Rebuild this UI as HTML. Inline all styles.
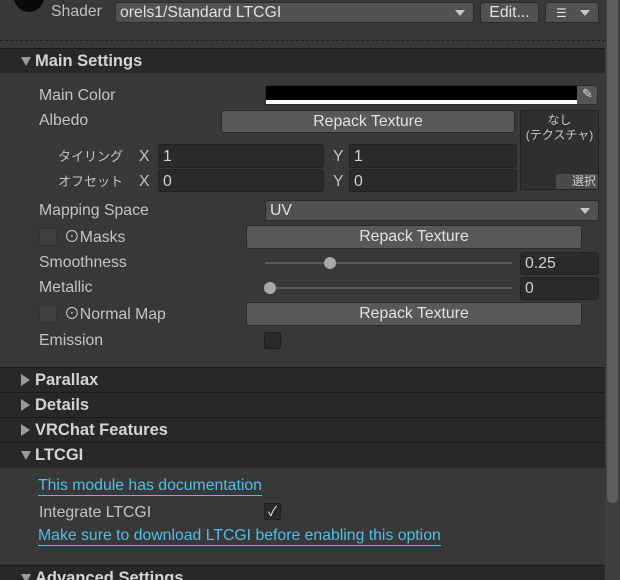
<!DOCTYPE html>
<html style="width:620px;height:580px;overflow:hidden"><head><meta charset="utf-8"><style>
*{margin:0;padding:0;box-sizing:border-box}
body{width:620px;height:580px;overflow:hidden;background:#383838;font-family:"Liberation Sans","Noto Sans CJK JP",sans-serif;color:#c4c4c4;font-size:15.8px;position:relative}
.a{position:absolute}
.lbl{position:absolute;line-height:20px;white-space:nowrap;margin-top:1px}
.hdr{position:absolute;left:0;width:605px;height:25px;background:#282828;border-top:1px solid #1a1a1a;font-weight:bold;color:#d4d4d4;font-size:16.5px;line-height:24px;padding-left:35px}
.tri{position:absolute;left:21px;top:7px;width:0;height:0}
.down{border-left:5px solid transparent;border-right:5px solid transparent;border-top:9px solid #9a9a9a;top:8px}
.right{border-top:6px solid transparent;border-bottom:6px solid transparent;border-left:9px solid #9a9a9a;top:6px}
.field{position:absolute;background:#2a2a2a;border:1px solid #222;border-radius:3px;line-height:20px;padding-left:4px;color:#d2d2d2}
.btn{position:absolute;background:#585858;border:1px solid #2a2a2a;border-radius:3px;text-align:center;line-height:22px;color:#e2e2e2}
.dd{position:absolute;background:#515151;border:1px solid #2c2c2c;border-radius:3px;line-height:20px;padding-left:4px;color:#e0e0e0}
.dd:after{content:"";position:absolute;right:8px;top:7px;border-left:5px solid transparent;border-right:5px solid transparent;border-top:6px solid #c8c8c8}
.link{position:absolute;color:#4bc1e8;border-bottom:1px solid #4bc1e8;line-height:19px;white-space:nowrap}
.cb{position:absolute;width:17px;height:17px;background:#2a2a2a;border:1px solid #202020;border-radius:2px}
.mini{position:absolute;width:18px;height:18px;background:#3f3f3f;border:1px solid #333}
</style></head><body>
<div class="a" style="left:14px;top:-18px;width:30px;height:30px;border-radius:50%;background:#0a0a0a"></div>
<div class="lbl" style="left:51px;top:1px;color:#c0c0c0">Shader</div>
<div class="dd" style="left:115px;top:2px;width:359px;height:21px">orels1/Standard LTCGI</div>
<div class="btn" style="left:480px;top:2px;width:59px;height:21px;background:#515151;line-height:20px">Edit...</div>
<div class="dd" style="left:545px;top:2px;width:54px;height:21px;padding:0"><span style="position:absolute;left:10px;top:0;font-size:12px">☰</span></div>
<div class="a" style="left:0;top:40px;width:605px;border-top:1px dashed #1e1e1e"></div>
<div class="hdr" style="top:48px"><span class="tri down"></span>Main Settings</div>
<div class="lbl" style="left:39px;top:85px">Main Color</div>
<div class="a" style="left:265px;top:85px;width:333px;height:20px;border:1px solid #2c2c2c;background:#555;border-radius:3px"></div>
<div class="a" style="left:266px;top:86px;width:311px;height:14px;background:#000"></div>
<div class="a" style="left:266px;top:100px;width:311px;height:4px;background:#fff"></div>
<div class="a" style="left:582px;top:86px;font-size:13px;color:#ddd">✎</div>
<div class="lbl" style="left:39px;top:110px">Albedo</div>
<div class="btn" style="left:221px;top:110px;width:294px;height:23px">Repack Texture</div>
<div class="a" style="left:520px;top:110px;width:79px;height:80px;background:#2f2f2f;border:1px solid #222;font-size:12px;text-align:center;line-height:15px;padding-top:2px;color:#c8c8c8">なし<br>(テクスチャ)</div>
<div class="a" style="left:556px;top:174px;width:42px;height:15px;background:#4a4a4a;font-size:12px;line-height:14px;text-align:right;padding-right:2px;color:#ccc">選択</div>
<div class="lbl" style="left:58px;top:146px;font-size:13px">タイリング</div>
<div class="lbl" style="left:139px;top:146px">X</div>
<div class="field" style="left:158px;top:144px;width:166px;height:24px;padding-top:2px">1</div>
<div class="lbl" style="left:333px;top:146px">Y</div>
<div class="field" style="left:349px;top:144px;width:168px;height:24px;padding-top:2px">1</div>
<div class="lbl" style="left:58px;top:171px;font-size:13px">オフセット</div>
<div class="lbl" style="left:139px;top:171px">X</div>
<div class="field" style="left:158px;top:169px;width:166px;height:23px;padding-top:2px">0</div>
<div class="lbl" style="left:333px;top:171px">Y</div>
<div class="field" style="left:349px;top:169px;width:168px;height:23px;padding-top:2px">0</div>
<div class="lbl" style="left:39px;top:200px">Mapping Space</div>
<div class="dd" style="left:265px;top:200px;width:334px;height:21px">UV</div>
<div class="mini" style="left:39px;top:228px"></div>
<div class="lbl" style="left:64px;top:227px">⊙Masks</div>
<div class="btn" style="left:246px;top:225px;width:336px;height:24px">Repack Texture</div>
<div class="lbl" style="left:39px;top:252px">Smoothness</div>
<div class="a" style="left:265px;top:262px;width:247px;height:2px;background:#5a5a5a"></div>
<div class="a" style="left:324px;top:257px;width:12px;height:12px;border-radius:50%;background:#a8a8a8"></div>
<div class="field" style="left:520px;top:252px;width:79px;height:23px;padding-top:1px">0.25</div>
<div class="lbl" style="left:39px;top:277px">Metallic</div>
<div class="a" style="left:265px;top:287px;width:247px;height:2px;background:#5a5a5a"></div>
<div class="a" style="left:264px;top:282px;width:12px;height:12px;border-radius:50%;background:#a8a8a8"></div>
<div class="field" style="left:520px;top:277px;width:79px;height:23px;padding-top:1px">0</div>
<div class="mini" style="left:39px;top:305px"></div>
<div class="lbl" style="left:64px;top:304px">⊙Normal Map</div>
<div class="btn" style="left:246px;top:302px;width:336px;height:24px">Repack Texture</div>
<div class="lbl" style="left:39px;top:330px">Emission</div>
<div class="cb" style="left:264px;top:332px"></div>
<div class="hdr" style="top:367px"><span class="tri right"></span>Parallax</div>
<div class="hdr" style="top:392px"><span class="tri right"></span>Details</div>
<div class="hdr" style="top:417px"><span class="tri right"></span>VRChat Features</div>
<div class="hdr" style="top:442px;height:26px"><span class="tri down"></span>LTCGI</div>
<div class="link" style="left:38px;top:476px">This module has documentation</div>
<div class="lbl" style="left:39px;top:502px">Integrate LTCGI</div>
<div class="cb" style="left:264px;top:503px;color:#eee;font-size:13px;line-height:15px;text-align:center">✓</div>
<div class="link" style="left:38px;top:526px">Make sure to download LTCGI before enabling this option</div>
<div class="hdr" style="top:565px"><span class="tri down"></span>Advanced Settings</div>
<div class="a" style="left:605px;top:0;width:15px;height:580px;background:#3e3e3e"></div>
<div class="a" style="left:607px;top:0;width:11px;height:503px;background:#5e5e5e;border-radius:0 0 5px 5px"></div>
</body></html>
